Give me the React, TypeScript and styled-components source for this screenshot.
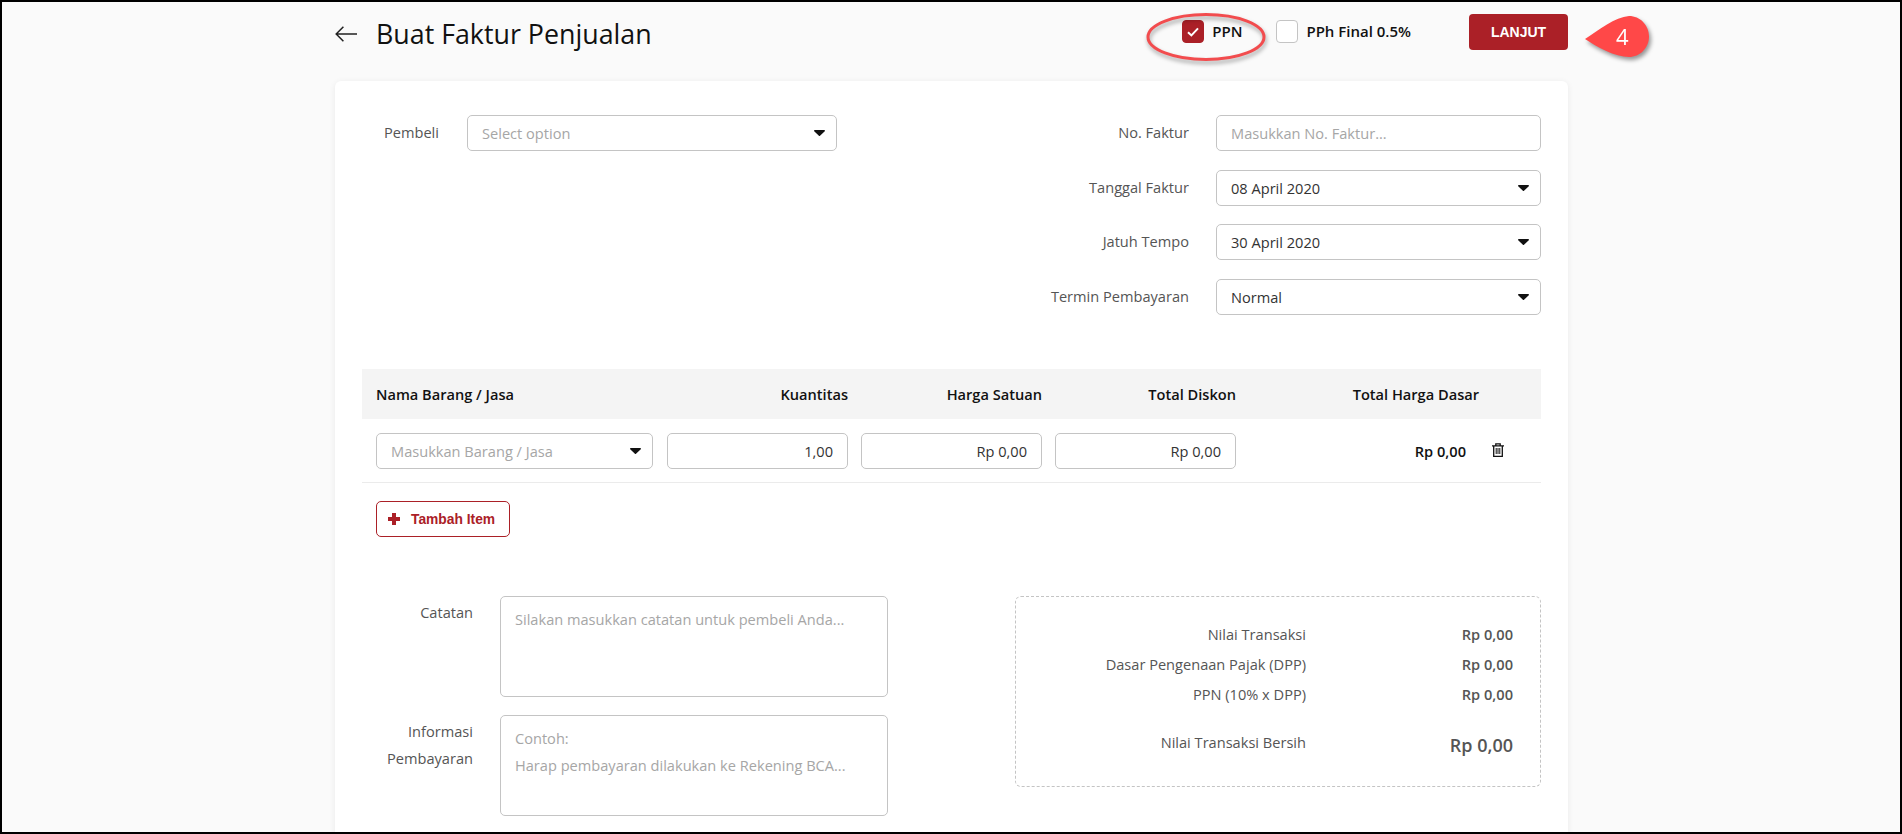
import styled, { createGlobalStyle } from "styled-components";

const GlobalStyle = createGlobalStyle`
    html, body {
        margin: 0;
        padding: 0;
        background: #fafafa;
    }
    * {
        box-sizing: border-box;
    }
`;

const ArrowLeft = () => (
    <svg width="22" height="16" viewBox="0 0 22 16" fill="none" stroke="#222" strokeWidth="1.5">
        <path d="M22 8H1.2M8.4 .8L1.2 8l7.2 7.2" />
    </svg>
);

const Check = () => (
    <svg width="12" height="10" viewBox="0 0 12 10" fill="none" stroke="#fff" strokeWidth="2">
        <path d="M1 5.2L4.4 8.4 11 1.4" />
    </svg>
);

const Caret = () => (
    <svg width="11" height="6" viewBox="0 0 11 6" fill="#111">
        <path d="M.8 0h9.4c.7 0 1 .7.6 1.2L6 5.7c-.3.3-.8.3-1.1 0L.2 1.2C-.2.7.1 0 .8 0z" />
    </svg>
);

const Plus = () => (
    <svg width="12" height="12" viewBox="0 0 12 12" fill="#ab2027">
        <path d="M4 0h4v4h4v4H8v4H4V8H0V4h4z" />
    </svg>
);

const Trash = () => (
    <svg width="12" height="14" viewBox="0 0 12 14" fill="none" stroke="#111" strokeWidth="1.3">
        <path d="M0 2.8h12M3.8 2.8V.8h4.4v2M1.7 2.8v10.5h8.6V2.8z" />
        <path d="M4.2 5v6M6 5v6M7.8 5v6" strokeWidth="1" />
    </svg>
);

const Ellipse = () => (
    <EllipseSvg width="122" height="52" viewBox="0 0 122 52">
        <ellipse cx="60" cy="25" rx="58" ry="22.5" fill="none" stroke="#f24c4e" strokeWidth="3" />
    </EllipseSvg>
);

const Teardrop = () => (
    <svg width="70" height="48" viewBox="0 0 70 48">
        <path d="M0 23C14 14 30 1 44 0c11 0 20 9 20 20.5S55 41 44 41C30 41 12 31 0 23z" fill="#ff4848" />
    </svg>
);

const fields = [
    { label: "No. Faktur", value: "Masukkan No. Faktur...", placeholder: true, caret: false },
    { label: "Tanggal Faktur", value: "08 April 2020", placeholder: false, caret: true },
    { label: "Jatuh Tempo", value: "30 April 2020", placeholder: false, caret: true },
    { label: "Termin Pembayaran", value: "Normal", placeholder: false, caret: true },
];

const summary = [
    { label: "Nilai Transaksi", value: "Rp 0,00" },
    { label: "Dasar Pengenaan Pajak (DPP)", value: "Rp 0,00" },
    { label: "PPN (10% x DPP)", value: "Rp 0,00" },
];

const App = () => {
    return (
        <Frame>
            <GlobalStyle />
            <Page>
                <TopBar>
                    <BackTitle>
                        <ArrowLeft />
                        <Title>Buat Faktur Penjualan</Title>
                    </BackTitle>
                    <TaxOptions>
                        <CheckItem>
                            <CheckBox $checked>
                                <Check />
                            </CheckBox>
                            <CheckText>PPN</CheckText>
                        </CheckItem>
                        <CheckItem>
                            <CheckBox />
                            <CheckText>PPh Final 0.5%</CheckText>
                        </CheckItem>
                    </TaxOptions>
                    <NextButton>LANJUT</NextButton>
                    <Ellipse />
                    <StepBadge>
                        <Teardrop />
                        <StepNumber>4</StepNumber>
                    </StepBadge>
                </TopBar>

                <Card>
                    <FormTop>
                        <BuyerRow>
                            <BuyerLabel>Pembeli</BuyerLabel>
                            <Control $width="370px">
                                <ControlText $placeholder>Select option</ControlText>
                                <Caret />
                            </Control>
                        </BuyerRow>
                        <InvoiceFields>
                            {fields.map((f) => (
                                <InvoiceRow key={f.label}>
                                    <InvoiceLabel>{f.label}</InvoiceLabel>
                                    <Control $width="325px">
                                        <ControlText $placeholder={f.placeholder}>{f.value}</ControlText>
                                        {f.caret && <Caret />}
                                    </Control>
                                </InvoiceRow>
                            ))}
                        </InvoiceFields>
                    </FormTop>

                    <TableHead>
                        <HeadCell $left>Nama Barang / Jasa</HeadCell>
                        <HeadCell>Kuantitas</HeadCell>
                        <HeadCell>Harga Satuan</HeadCell>
                        <HeadCell>Total Diskon</HeadCell>
                        <HeadCell>Total Harga Dasar</HeadCell>
                    </TableHead>
                    <TableRow>
                        <Control $width="277px">
                            <ControlText $placeholder>Masukkan Barang / Jasa</ControlText>
                            <Caret />
                        </Control>
                        <Control $right>
                            <ControlText>1,00</ControlText>
                        </Control>
                        <Control $right>
                            <ControlText>Rp 0,00</ControlText>
                        </Control>
                        <Control $right>
                            <ControlText>Rp 0,00</ControlText>
                        </Control>
                        <RowTotal>Rp 0,00</RowTotal>
                        <TrashWrap>
                            <Trash />
                        </TrashWrap>
                    </TableRow>

                    <AddButton>
                        <Plus />
                        Tambah Item
                    </AddButton>

                    <Bottom>
                        <Notes>
                            <NoteRow>
                                <NoteLabel>Catatan</NoteLabel>
                                <NoteBox>Silakan masukkan catatan untuk pembeli Anda...</NoteBox>
                            </NoteRow>
                            <NoteRow>
                                <NoteLabel>
                                    Informasi
                                    <br />
                                    Pembayaran
                                </NoteLabel>
                                <NoteBox>
                                    Contoh:
                                    <br />
                                    Harap pembayaran dilakukan ke Rekening BCA...
                                </NoteBox>
                            </NoteRow>
                        </Notes>
                        <Summary>
                            {summary.map((s) => (
                                <SummaryRow key={s.label}>
                                    <SummaryLabel>{s.label}</SummaryLabel>
                                    <SummaryValue>{s.value}</SummaryValue>
                                </SummaryRow>
                            ))}
                            <SummaryTotal>
                                <SummaryLabel>Nilai Transaksi Bersih</SummaryLabel>
                                <TotalValue>Rp 0,00</TotalValue>
                            </SummaryTotal>
                        </Summary>
                    </Bottom>
                </Card>
            </Page>
        </Frame>
    );
};

export default App;

const Frame = styled.div`
    width: 1902px;
    height: 834px;
    border: 2px solid #000;
    background: #fafafa;
    overflow: hidden;
    font-family: "Open Sans", "Noto Sans", sans-serif;
    font-size: 14.6px;
    color: #333;
`;

const Page = styled.div`
    width: 1233px;
    margin-left: 333px;
`;

const TopBar = styled.div`
    position: relative;
    display: flex;
    align-items: flex-start;
    height: 79px;
    padding-top: 12px;
`;

const BackTitle = styled.div`
    display: flex;
    align-items: center;
    gap: 19px;
    height: 40px;
`;

const Title = styled.h1`
    margin: 0;
    padding-bottom: 2px;
    font-size: 26.8px;
    font-weight: 400;
    color: #111;
`;

const TaxOptions = styled.div`
    display: flex;
    gap: 34px;
    margin-left: auto;
    margin-right: 58px;
    padding-top: 6px;
`;

const CheckItem = styled.label`
    display: flex;
    align-items: center;
    gap: 8px;
    font-size: 15px;
    font-weight: 600;
    color: #111;
`;

const CheckText = styled.span`
    padding-bottom: 2px;
`;

const CheckBox = styled.span<{ $checked?: boolean }>`
    display: flex;
    align-items: center;
    justify-content: center;
    width: 22px;
    height: 23px;
    border-radius: 4px;
    border: 1px solid ${(p) => (p.$checked ? "#ab2027" : "#c4c4c4")};
    background: ${(p) => (p.$checked ? "#ab2027" : "#fff")};
`;

const NextButton = styled.button`
    width: 99px;
    height: 36px;
    padding: 0;
    border: 0;
    border-radius: 4px;
    background: #ab2027;
    color: #fff;
    font-family: "Liberation Sans", Arial, sans-serif;
    font-size: 14px;
    font-weight: 700;
`;

const EllipseSvg = styled.svg`
    position: absolute;
    left: 811px;
    top: 10px;
    filter: drop-shadow(1px 3px 2px rgba(0, 0, 0, 0.35));
`;

const StepBadge = styled.div`
    position: absolute;
    left: 1250px;
    top: 14px;
    width: 70px;
    height: 48px;
    filter: drop-shadow(2px 3px 2px rgba(0, 0, 0, 0.4));
`;

const StepNumber = styled.span`
    position: absolute;
    left: 31px;
    top: 6px;
    font-family: "Open Sans", sans-serif;
    font-size: 22px;
    line-height: 28px;
    color: #fff;
`;

const Card = styled.div`
    background: #fff;
    border-radius: 6px;
    box-shadow: 0 1px 6px rgba(0, 0, 0, 0.07);
    padding: 34px 27px 40px;
`;

const FormTop = styled.div`
    display: flex;
    justify-content: space-between;
    align-items: flex-start;
`;

const BuyerRow = styled.div`
    display: flex;
    align-items: center;
    gap: 28px;
`;

const BuyerLabel = styled.div`
    width: 77px;
    padding-bottom: 2px;
    text-align: right;
    color: #555;
`;

const InvoiceFields = styled.div`
    display: flex;
    flex-direction: column;
    gap: 18.5px;
`;

const InvoiceRow = styled.div`
    display: flex;
    align-items: center;
    gap: 27px;
`;

const InvoiceLabel = styled.div`
    width: 170px;
    padding-bottom: 2px;
    text-align: right;
    color: #555;
`;

const Control = styled.div<{ $width?: string; $right?: boolean }>`
    display: flex;
    align-items: center;
    justify-content: ${(p) => (p.$right ? "flex-end" : "space-between")};
    width: ${(p) => p.$width || "auto"};
    height: 36px;
    padding: 0 ${(p) => (p.$right ? "14px" : "11px")} 0 14px;
    border: 1px solid #c4c4c4;
    border-radius: 5px;
    background: #fff;
`;

const ControlText = styled.span<{ $placeholder?: boolean }>`
    color: ${(p) => (p.$placeholder ? "#a6a6a6" : "#333")};
`;

const columns = "278px 181px 181px 181px 230px 1fr";

const TableHead = styled.div`
    display: grid;
    grid-template-columns: ${columns};
    column-gap: 13px;
    align-items: center;
    height: 50px;
    margin-top: 54.5px;
    padding: 0 14px;
    background: #f4f4f4;
`;

const HeadCell = styled.div<{ $left?: boolean }>`
    text-align: ${(p) => (p.$left ? "left" : "right")};
    font-weight: 600;
    color: #111;
`;

const TableRow = styled.div`
    display: grid;
    grid-template-columns: ${columns};
    column-gap: 13px;
    align-items: start;
    height: 64px;
    padding: 14px 14px 0;
    border-bottom: 1px solid #ebebeb;
`;

const RowTotal = styled.div`
    padding-right: 13px;
    text-align: right;
    line-height: 36px;
    font-weight: 600;
    color: #111;
`;

const TrashWrap = styled.div`
    display: flex;
    padding-top: 10px;
`;

const AddButton = styled.button`
    display: flex;
    align-items: center;
    gap: 11px;
    width: 134px;
    height: 36px;
    margin: 18px 0 0 14px;
    padding: 0 11px;
    border: 1px solid #ab2027;
    border-radius: 5px;
    background: #fff;
    color: #ab2027;
    font-family: "Liberation Sans", Arial, sans-serif;
    font-size: 13.8px;
    font-weight: 700;
`;

const Bottom = styled.div`
    display: flex;
    justify-content: space-between;
    align-items: flex-start;
    margin-top: 59px;
`;

const Notes = styled.div`
    display: flex;
    flex-direction: column;
    gap: 18px;
`;

const NoteRow = styled.div`
    display: flex;
    align-items: flex-start;
    gap: 27px;
`;

const NoteLabel = styled.div`
    width: 111px;
    padding-top: 3px;
    text-align: right;
    line-height: 27px;
    color: #555;
`;

const NoteBox = styled.div`
    width: 388px;
    height: 101px;
    padding: 9px 14px;
    border: 1px solid #c4c4c4;
    border-radius: 5px;
    line-height: 27px;
    color: #a6a6a6;
`;

const Summary = styled.div`
    width: 526px;
    height: 191px;
    padding: 22px 27px 22px 0;
    border: 1px dashed #c4c4c4;
    border-radius: 6px;
`;

const summaryColumns = "290px 1fr";

const SummaryRow = styled.div`
    display: grid;
    grid-template-columns: ${summaryColumns};
    line-height: 30px;
`;

const SummaryLabel = styled.div`
    text-align: right;
    line-height: 30px;
    color: #555;
`;

const SummaryValue = styled.div`
    text-align: right;
    font-weight: 600;
    color: #555;
`;

const SummaryTotal = styled.div`
    display: grid;
    grid-template-columns: ${summaryColumns};
    align-items: start;
    margin-top: 18px;
`;

const TotalValue = styled.div`
    text-align: right;
    font-size: 18px;
    font-weight: 600;
    line-height: 36px;
    color: #555;
`;
